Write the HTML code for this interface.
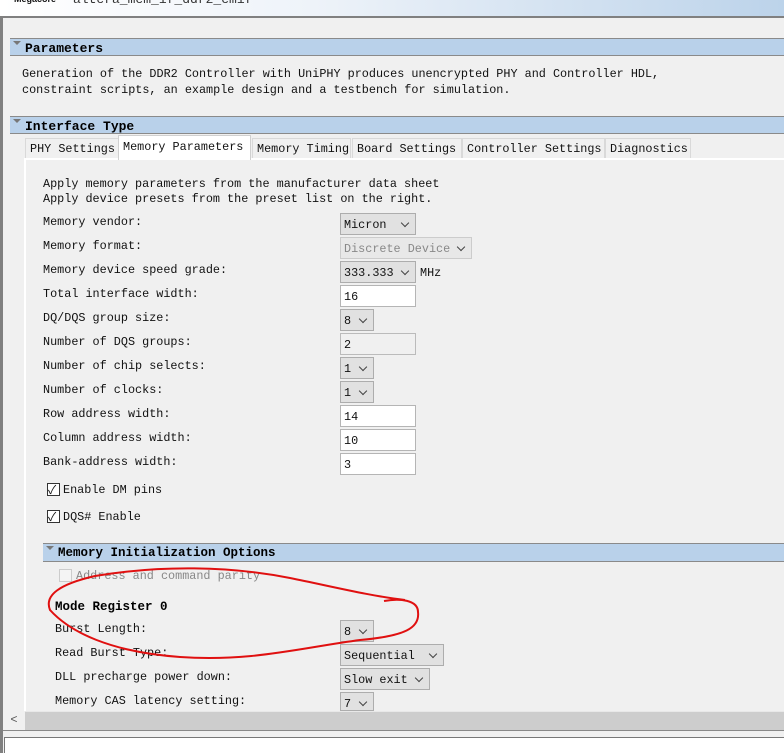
<!DOCTYPE html>
<html><head><meta charset="utf-8"><style>
*{margin:0;padding:0;box-sizing:border-box}
body{width:784px;height:753px;overflow:hidden;background:#f0f0f0;position:relative;font-family:"Liberation Mono","Noto Sans CJK SC",monospace;font-size:11.8px;color:#111}
.a{position:absolute;white-space:nowrap}
.bar{position:absolute;background:#b9d1ea;border-top:1px solid #8a8a8a;border-bottom:1px solid #8a8a8a;right:0}
.bar b{position:absolute;left:15px;top:2px;font-size:13px;font-weight:bold;color:#000}
.bar i{position:absolute;left:3px;top:2px;width:0;height:0;border-left:4px solid transparent;border-right:4px solid transparent;border-top:4px solid #777}
.lbl{position:absolute;left:43px;white-space:nowrap;margin-top:1px}
.cb{position:absolute;left:340px;height:22px;border:1px solid #adadad;background:#e1e1e1;padding:4px 0 0 3px;white-space:nowrap}
.cb:after{content:"";position:absolute;right:7px;top:6px;width:5px;height:5px;border-right:1px solid #444;border-bottom:1px solid #444;transform:rotate(45deg)}
.in{position:absolute;left:340px;height:22px;width:76px;border:1px solid #b5b5b5;background:#fff;padding:4px 0 0 3px}
.tab{position:absolute;top:138px;height:20px;border:1px solid #d9d9d9;border-bottom:none;background:#f0f0f0;padding:3px 0 0 4px;white-space:nowrap}
.chk{position:absolute;width:13px;height:13px;border:1px solid #333;background:#fff}
</style></head><body>
<div class="a" style="left:0;top:0;width:784px;height:18px;background:linear-gradient(90deg,#fff 0%,#eef3f9 40%,#bcd3ea 100%);border-bottom:2px solid #808080"></div>
<div class="a" style="left:14px;top:-6px;font-size:9px;font-weight:bold;font-family:'Liberation Sans',sans-serif">Megacore</div>
<div class="a" style="left:73px;top:-8px;font-size:13px;color:#333">altera_mem_if_ddr2_emif</div>
<div class="a" style="left:0;top:18px;width:3px;height:735px;background:#808080"></div>

<div class="bar" style="left:10px;top:38px;height:18px"><i></i><b>Parameters</b></div>
<div class="a" style="left:22px;top:67px">Generation of the DDR2 Controller with UniPHY produces unencrypted PHY and Controller HDL,</div>
<div class="a" style="left:22px;top:83px">constraint scripts, an example design and a testbench for simulation.</div>
<div class="bar" style="left:10px;top:116px;height:18px"><i></i><b>Interface Type</b></div>

<div class="a" style="left:24px;top:158px;width:760px;height:553px;border-left:2px solid #fff;border-top:2px solid #fff;background:#f0f0f0"></div>
<div class="tab" style="left:25px;width:94px">PHY Settings</div>
<div class="tab" style="left:252px;width:99px">Memory Timing</div>
<div class="tab" style="left:352px;width:110px">Board Settings</div>
<div class="tab" style="left:462px;width:143px">Controller Settings</div>
<div class="tab" style="left:605px;width:86px">Diagnostics</div>
<div class="tab" style="left:118px;top:135px;height:25px;width:133px;background:#fff;border-color:#d0d0d0;padding-top:4px">Memory Parameters</div>

<div class="lbl" style="top:176px">Apply memory parameters from the manufacturer data sheet</div>
<div class="lbl" style="top:191px">Apply device presets from the preset list on the right.</div>
<div class="lbl" style="top:214px">Memory vendor:</div>
<div class="lbl" style="top:238px">Memory format:</div>
<div class="lbl" style="top:262px">Memory device speed grade:</div>
<div class="lbl" style="top:286px">Total interface width:</div>
<div class="lbl" style="top:310px">DQ/DQS group size:</div>
<div class="lbl" style="top:334px">Number of DQS groups:</div>
<div class="lbl" style="top:358px">Number of chip selects:</div>
<div class="lbl" style="top:382px">Number of clocks:</div>
<div class="lbl" style="top:406px">Row address width:</div>
<div class="lbl" style="top:430px">Column address width:</div>
<div class="lbl" style="top:454px">Bank-address width:</div>

<div class="cb" style="top:213px;width:76px">Micron</div>
<div class="cb" style="top:237px;width:132px;color:#888;background:#e8e8e8;border-color:#ccc">Discrete Device</div>
<div class="cb" style="top:261px;width:76px">333.333</div>
<div class="a" style="left:420px;top:266px">MHz</div>
<div class="in" style="top:285px">16</div>
<div class="cb" style="top:309px;width:34px">8</div>
<div class="in" style="top:333px;background:#f0f0f0;border-color:#bbb">2</div>
<div class="cb" style="top:357px;width:34px">1</div>
<div class="cb" style="top:381px;width:34px">1</div>
<div class="in" style="top:405px">14</div>
<div class="in" style="top:429px">10</div>
<div class="in" style="top:453px">3</div>

<div class="chk" style="left:47px;top:483px"></div><div class="a" style="left:48px;top:481px;font-size:12px">✓</div>
<div class="lbl" style="left:63px;top:482px">Enable DM pins</div>
<div class="chk" style="left:47px;top:510px"></div><div class="a" style="left:48px;top:508px;font-size:12px">✓</div>
<div class="lbl" style="left:63px;top:509px">DQS# Enable</div>

<div class="bar" style="left:43px;top:543px;height:19px"><i></i><b style="font-size:12.5px">Memory Initialization Options</b></div>
<div class="chk" style="left:59px;top:569px;border-color:#ccc;background:#f4f4f4"></div>
<div class="lbl" style="left:76px;top:568px;color:#888">Address and command parity</div>
<div class="lbl" style="left:55px;top:599px;font-weight:bold;font-size:12.5px;color:#000">Mode Register 0</div>
<div class="lbl" style="left:55px;top:621px">Burst Length:</div>
<div class="lbl" style="left:55px;top:645px">Read Burst Type:</div>
<div class="lbl" style="left:55px;top:669px">DLL precharge power down:</div>
<div class="lbl" style="left:55px;top:693px">Memory CAS latency setting:</div>
<div class="cb" style="top:620px;width:34px">8</div>
<div class="cb" style="top:644px;width:104px">Sequential</div>
<div class="cb" style="top:668px;width:90px">Slow exit</div>
<div class="cb" style="top:692px;width:34px;height:19px;overflow:hidden">7</div>

<div class="a" style="left:3px;top:711px;width:781px;height:19px;background:#cdcdcd;border-top:1px solid #e8e8e8"></div>
<div class="a" style="left:3px;top:711px;width:22px;height:19px;background:#f0f0f0;text-align:center;font-size:12px;line-height:18px;color:#555">&lt;</div>
<div class="a" style="left:3px;top:730px;width:781px;height:23px;background:#f0f0f0;border-top:1px solid #888"></div>
<div class="a" style="left:4px;top:737px;width:780px;height:16px;background:#fff;border-top:1px solid #777;border-left:1px solid #777"></div>

<svg class="a" style="left:0;top:0" width="784" height="753"><path d="M384 601 C400 598 418 600 418 612 C420 628 405 636 360 640 C300 648 250 662 180 657 C110 652 70 632 50 610 C44 595 60 584 95 576 C160 565 230 566 290 578 C330 586 370 596 405 600" fill="none" stroke="#e01010" stroke-width="2"/></svg>
</body></html>
